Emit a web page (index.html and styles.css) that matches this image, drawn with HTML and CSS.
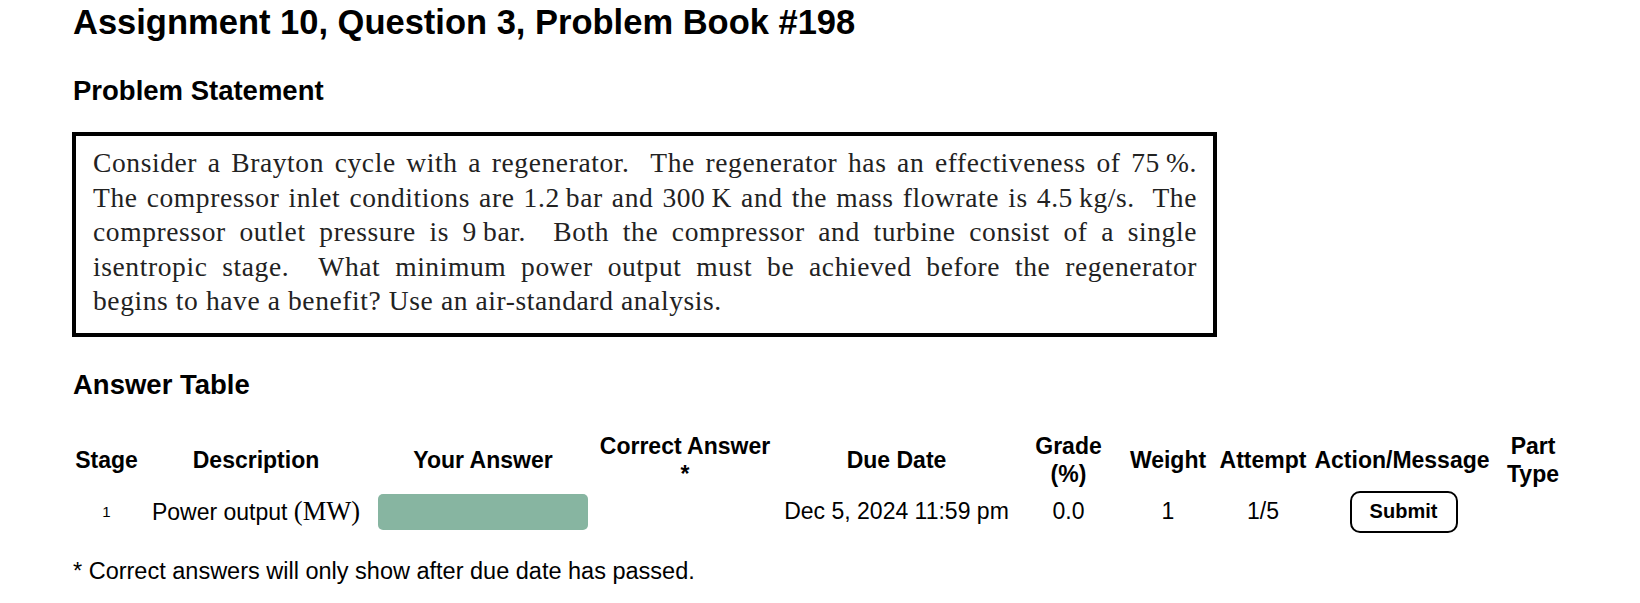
FILE: index.html
```html
<!DOCTYPE html>
<html>
<head>
<meta charset="utf-8">
<link rel="stylesheet" href="styles.css">
</head>
<body>
<h1 class="title">Assignment 10, Question 3, Problem Book #198</h1>
<h2 class="section-title ps-title">Problem Statement</h2>
<div class="statement">
  <div class="line">Consider a Brayton cycle with a regenerator.&nbsp; The regenerator has an effectiveness of 75&#8201;%.</div>
  <div class="line">The compressor inlet conditions are 1.2&#8201;bar and 300&#8201;K and the mass flowrate is 4.5&#8201;kg/s.&nbsp; The</div>
  <div class="line">compressor outlet pressure is 9&#8201;bar.&nbsp; Both the compressor and turbine consist of a single</div>
  <div class="line">isentropic stage.&nbsp; What minimum power output must be achieved before the regenerator</div>
  <div class="line last">begins to have a benefit? Use an air-standard analysis.</div>
</div>
<h2 class="section-title at-title">Answer Table</h2>
<table class="answers">
  <thead>
    <tr>
      <th class="c-stage">Stage</th>
      <th class="c-desc">Description</th>
      <th class="c-your">Your Answer</th>
      <th class="c-correct">Correct Answer<br>*</th>
      <th class="c-due">Due Date</th>
      <th class="c-grade">Grade<br>(%)</th>
      <th class="c-weight">Weight</th>
      <th class="c-attempt">Attempt</th>
      <th class="c-action">Action/Message</th>
      <th class="c-type">Part<br>Type</th>
    </tr>
  </thead>
  <tbody>
    <tr>
      <td class="stage-num">1</td>
      <td>Power output <span class="math">(MW)</span></td>
      <td><div class="answer-input"></div></td>
      <td></td>
      <td>Dec 5, 2024 11:59 pm</td>
      <td>0.0</td>
      <td>1</td>
      <td>1/5</td>
      <td><button class="submit">Submit</button></td>
      <td></td>
    </tr>
  </tbody>
</table>
<p class="footnote">* Correct answers will only show after due date has passed.</p>
</body>
</html>
```
FILE: styles.css
```css
html, body {
  margin: 0;
  padding: 0;
  background: #ffffff;
  color: #000000;
}
body {
  padding: 0 73px;
  font-family: "Liberation Sans", Arial, sans-serif;
}
.title {
  margin: 0;
  padding-top: 2px;
  font-size: 34.5px;
  line-height: 40px;
  font-weight: bold;
}
.section-title {
  margin: 0;
  font-size: 27.5px;
  line-height: 31px;
  font-weight: bold;
}
.ps-title {
  margin-top: 33px;
}
.statement {
  margin-top: 26px;
  margin-left: -1px;
  width: 1145px;
  box-sizing: border-box;
  border: 4px solid #000;
  padding: 10px 16px 14px 17px;
  font-family: "Liberation Serif", "Times New Roman", serif;
  font-size: 27.5px;
  letter-spacing: 0.6px;
  line-height: 34.5px;
  color: #222;
}
.statement .line {
  text-align: justify;
  text-align-last: justify;
  white-space: nowrap;
}
.statement .line.last {
  text-align-last: left;
}
.at-title {
  margin-top: 32px;
}
.answers {
  margin-top: 32px;
  border-collapse: collapse;
  table-layout: fixed;
  width: 1499px;
}
.answers th, .answers td {
  padding: 0;
  text-align: center;
  vertical-align: middle;
}
.answers th {
  font-size: 23px;
  line-height: 28.5px;
  font-weight: bold;
  height: 57px;
}
.answers td {
  font-size: 23px;
  line-height: 27px;
  height: 46px;
}
.c-stage { width: 67px; }
.c-desc { width: 232px; }
.c-your { width: 222px; }
.c-correct { width: 182px; }
.c-due { width: 241px; }
.c-grade { width: 103px; }
.c-weight { width: 96px; }
.c-attempt { width: 94px; }
.c-action { width: 184px; }
.c-type { width: 78px; }
.answers td.stage-num {
  font-size: 15px;
}
.math {
  font-family: "Liberation Serif", "Times New Roman", serif;
  font-size: 26.5px;
}
.answer-input {
  width: 210px;
  height: 36px;
  margin: 0 auto;
  background: #87b5a1;
  border-radius: 5px;
}
.submit {
  width: 108px;
  height: 42px;
  background: #fff;
  border: 2px solid #000;
  border-radius: 10px;
  font-family: "Liberation Sans", Arial, sans-serif;
  font-size: 20px;
  font-weight: bold;
  color: #000;
  padding: 0;
  margin-left: 3px;
}
.footnote {
  margin: 23px 0 0;
  font-size: 23.5px;
  line-height: 27px;
}
```
